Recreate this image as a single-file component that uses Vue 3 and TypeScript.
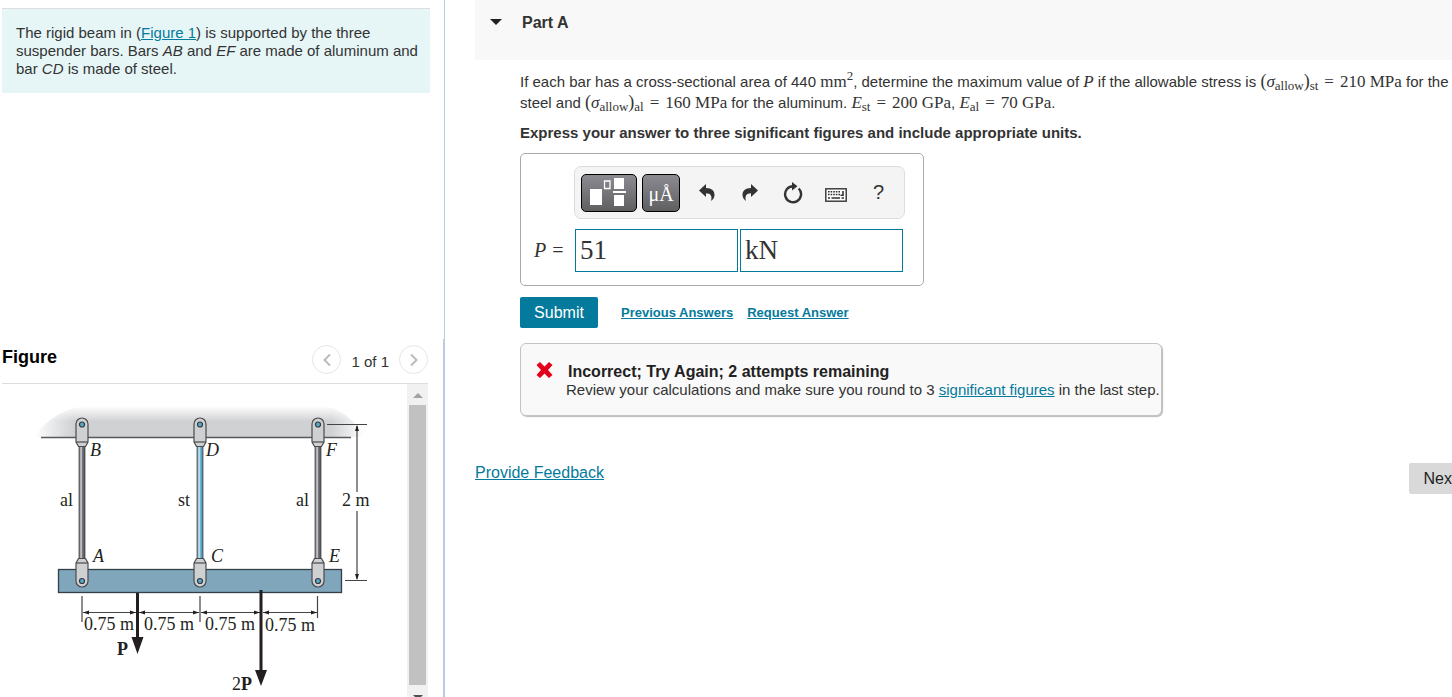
<script setup lang="ts">
import { ref } from 'vue'

interface Label {
  x: number
  y: number
  text: string
  kind: 'plain' | 'italic' | 'bold'
}

const answer = ref('51')
const unit = ref('kN')

const bars = [
  { x: 82, fill: 'url(#aluminum)' },
  { x: 200, fill: 'url(#steel)' },
  { x: 318, fill: 'url(#aluminum)' },
]

const labels: Label[] = [
  { x: 90, y: 456, text: 'B', kind: 'italic' },
  { x: 206, y: 456, text: 'D', kind: 'italic' },
  { x: 326, y: 456, text: 'F', kind: 'italic' },
  { x: 93, y: 562, text: 'A', kind: 'italic' },
  { x: 211, y: 562, text: 'C', kind: 'italic' },
  { x: 329, y: 562, text: 'E', kind: 'italic' },
  { x: 60, y: 506, text: 'al', kind: 'plain' },
  { x: 178, y: 506, text: 'st', kind: 'plain' },
  { x: 296, y: 506, text: 'al', kind: 'plain' },
  { x: 342, y: 506, text: '2 m', kind: 'plain' },
  { x: 84, y: 630, text: '0.75 m', kind: 'plain' },
  { x: 144, y: 630, text: '0.75 m', kind: 'plain' },
  { x: 205, y: 630, text: '0.75 m', kind: 'plain' },
  { x: 265, y: 631, text: '0.75 m', kind: 'plain' },
  { x: 117, y: 655, text: 'P', kind: 'bold' },
  { x: 232, y: 690, text: '2', kind: 'plain' },
  { x: 241, y: 690, text: 'P', kind: 'bold' },
]

const spans = [
  { from: 83, to: 136 },
  { from: 139, to: 199 },
  { from: 201, to: 260 },
  { from: 263, to: 317 },
]
</script>

<template>
  <div class="page">
    <aside class="side">
      <div class="upper">
        <p class="problem">
          The rigid beam in (<a href="#figure">Figure 1</a>) is supported by the three<br />
          suspender bars. Bars <i>AB</i> and <i>EF</i> are made of aluminum and<br />
          bar <i>CD</i> is made of steel.
        </p>
      </div>
      <section id="figure" class="figure">
        <header class="figure-head">
          <h2>Figure</h2>
          <nav class="pager">
            <button type="button" aria-label="Previous figure">
              <svg width="10" height="14" viewBox="0 0 10 14"><path d="M8 1.5 2.5 7 8 12.5" /></svg>
            </button>
            <span>1 of 1</span>
            <button type="button" aria-label="Next figure">
              <svg width="10" height="14" viewBox="0 0 10 14"><path d="M2 1.5 7.5 7 2 12.5" /></svg>
            </button>
          </nav>
        </header>
        <div class="viewer">
          <svg class="diagram" width="405" height="313" viewBox="2 384 405 313">
            <defs>
              <linearGradient id="aluminum">
                <stop offset="0" stop-color="#55565a" />
                <stop offset="0.2" stop-color="#a5a6a9" />
                <stop offset="0.4" stop-color="#c9cacc" />
                <stop offset="0.55" stop-color="#77787b" />
                <stop offset="1" stop-color="#4c4d50" />
              </linearGradient>
              <linearGradient id="steel">
                <stop offset="0" stop-color="#4f7f94" />
                <stop offset="0.35" stop-color="#d5e9f1" />
                <stop offset="0.6" stop-color="#68b4d3" />
                <stop offset="1" stop-color="#3f7c98" />
              </linearGradient>
              <linearGradient id="ceiling" x2="0" y2="1">
                <stop offset="0" stop-color="#d0d1d3" stop-opacity="0" />
                <stop offset="0.5" stop-color="#d0d1d3" />
                <stop offset="1" stop-color="#d0d1d3" />
              </linearGradient>
              <linearGradient id="fade">
                <stop offset="0" stop-color="#fff" stop-opacity="0" />
                <stop offset="0.12" stop-color="#fff" />
                <stop offset="0.9" stop-color="#fff" />
                <stop offset="1" stop-color="#fff" stop-opacity="0" />
              </linearGradient>
              <mask id="edges"><rect x="34" y="400" width="330" height="38" fill="url(#fade)" /></mask>
            </defs>

            <path d="M34 437Q52 411 84 406H325Q350 411 364 437Z" fill="url(#ceiling)" mask="url(#edges)" />
            <path d="M41 437.5H351" stroke="#58595b" stroke-width="1.5" />

            <rect x="58.5" y="569.5" width="283" height="23" fill="#7fa6ba" stroke="#333f47" stroke-width="1.3" />

            <g v-for="bar in bars" :key="bar.x" :transform="`translate(${bar.x} 0)`">
              <rect x="-3" y="446" width="6" height="114" :fill="bar.fill" stroke="#4b4d50" stroke-width="0.8" />
              <g class="clevis">
                <path d="M-6 442V424A6 6 0 0 1 6 424V442L3.500 446.500H-3.500Z" />
                <path d="M-6 442H6" />
                <circle cx="0" cy="424.500" r="2.5" />
                <path d="M-6 563L-3.500 558.500H3.500L6 563V581A6 6 0 0 1 -6 581Z" />
                <path d="M-6 563H6" />
                <circle cx="0" cy="581" r="2.5" />
              </g>
            </g>

            <g class="dimension">
              <path d="M327 424.500H367M345 580.500H367M357 426V492M357 511V579" />
              <path d="M82 596V622M200 596V622M317.500 596V618" />
              <path v-for="s in spans" :key="s.from" :d="`M${s.from} 612.500H${s.to}`" />
            </g>
            <g fill="#231f20">
              <path d="M357 425L359 431H355ZM357 580L359 574H355Z" />
              <path
                v-for="s in spans"
                :key="s.from"
                :d="`M${s.from} 612.500l6 -2v4ZM${s.to} 612.500l-6 -2v4Z`"
              />
              <path d="M136 593H139V637H143.500L137.500 654L131.500 637H136Z" />
              <path d="M259.500 590H262.500V670H267L261 686L255 670H259.500Z" />
            </g>
            <text v-for="(l, i) in labels" :key="i" :x="l.x" :y="l.y" :class="l.kind">{{ l.text }}</text>
          </svg>
          <div class="scrollbar" aria-hidden="true">
            <span class="arrow up"></span>
            <span class="thumb"></span>
            <span class="arrow down"></span>
          </div>
        </div>
      </section>
    </aside>

    <main class="main">
      <header class="part">
        <span class="caret"></span>
        <h1>Part A</h1>
      </header>

      <div class="content">
        <p class="question">
          If each bar has a cross-sectional area of 440 <span class="math">mm<sup>2</sup></span
          >, determine the maximum value of <span class="math"><i>P</i></span> if the allowable stress is
          <span class="math"><b>(</b><i>σ</i><sub>allow</sub><b>)</b><sub>st</sub><em>=</em>210 MPa</span> for the<br />
          steel and <span class="math"><b>(</b><i>σ</i><sub>allow</sub><b>)</b><sub>al</sub><em>=</em>160 MPa</span> for
          the aluminum. <span class="math"><i>E</i><sub>st</sub><em>=</em>200 GPa</span>,
          <span class="math"><i>E</i><sub>al</sub><em>=</em>70 GPa</span>.
        </p>
        <p class="instruction">Express your answer to three significant figures and include appropriate units.</p>

        <form class="answer" @submit.prevent>
          <div class="toolbar">
            <button type="button" class="dark templates" aria-label="Templates">
              <svg width="40" height="32" viewBox="0 0 40 32">
                <path d="M1 12H13V28H1ZM25 1H35V12H25ZM25 18H35V29H25ZM24 14H37V16H24Z" fill="#fff" />
                <path d="M15.500 4H21V11.500H15.500Z" fill="none" stroke="#fff" stroke-width="1.3" />
              </svg>
            </button>
            <button type="button" class="dark units" aria-label="Units">μÅ</button>
            <button type="button" class="tool" aria-label="Undo">
              <svg width="16" height="18" viewBox="0 0 16 18">
                <path d="M0 6.500 7 0V4C13 4 15.500 7 15.500 11C15.500 13.500 14 15.500 12 17C13.500 12 11.500 9.300 7 9.300V13Z" />
              </svg>
            </button>
            <button type="button" class="tool" aria-label="Redo">
              <svg width="16" height="18" viewBox="0 0 16 18">
                <path d="M16 6.500 9 0V4C3 4 .5 7 .5 11C.5 13.500 2 15.500 4 17C2.500 12 4.500 9.300 9 9.300V13Z" />
              </svg>
            </button>
            <button type="button" class="tool" aria-label="Reset">
              <svg width="20" height="22" viewBox="0 0 20 22">
                <path d="M15.700 6.500A8 8 0 1 1 10 4.200" fill="none" stroke="#333" stroke-width="2.4" />
                <path d="M9 0 14.500 4.200 9 8.500Z" />
              </svg>
            </button>
            <button type="button" class="tool keyboard" aria-label="Keyboard">
              <svg width="22" height="14" viewBox="0 0 22 14">
                <rect x="0.8" y="0.8" width="20.4" height="12.4" fill="#fff" stroke="#333" stroke-width="1.4" />
                <path d="M3 3.800H16M3 6.500H16" fill="none" stroke="#333" stroke-width="1.6" stroke-dasharray="1.600 1" />
                <path d="M3 10H5M6.500 10H15M16.500 10H19M18 3V7.300H15.500" fill="none" stroke="#333" stroke-width="1.6" />
              </svg>
            </button>
            <button type="button" class="tool help" aria-label="Help">?</button>
          </div>
          <div class="fields">
            <label for="value"><i>P</i><span>=</span></label>
            <input id="value" v-model="answer" type="text" />
            <input v-model="unit" type="text" aria-label="Unit" />
          </div>
        </form>

        <div class="actions">
          <button type="button" class="submit">Submit</button>
          <a href="#previous">Previous Answers</a>
          <a href="#request">Request Answer</a>
        </div>

        <section class="feedback">
          <svg width="17" height="16" viewBox="0 0 17 16">
            <path d="M4 0 8.500 4.500 13 0 16.500 3 12 8 16.500 13 13 16 8.500 11.500 4 16 .5 13 5 8 .5 3Z" fill="#e2001a" />
          </svg>
          <div>
            <h2>Incorrect; Try Again; 2 attempts remaining</h2>
            <p>
              Review your calculations and make sure you round to 3 <a href="#sigfigs">significant figures</a> in the
              last step.
            </p>
          </div>
        </section>
      </div>

      <footer class="foot">
        <a href="#feedback">Provide Feedback</a>
        <button type="button" class="next">Next</button>
      </footer>
    </main>
  </div>
</template>

<style>
body {
  margin: 0;
  background: #fff;
}
</style>

<style scoped>
.page {
  display: flex;
  height: 100vh;
  overflow: hidden;
  font-family: "Liberation Sans", Arial, sans-serif;
  font-size: 15px;
  color: #333;
}
h1,
h2,
p {
  margin: 0;
}
a {
  color: #047a9c;
}
button {
  font-family: inherit;
  padding: 0;
}
.side {
  display: flex;
  flex-direction: column;
  flex: none;
  width: 445px;
}
.upper {
  box-sizing: border-box;
  height: 339px;
  padding: 8px 14px 0 2px;
  border-right: 1px solid #b8cbe0;
}
.problem {
  padding: 15px 8px 15px 14px;
  line-height: 18px;
  border-top: 1px solid #ddd;
  background: #e6f6f7;
}
.figure {
  display: flex;
  flex-direction: column;
  flex: 1;
  min-height: 0;
  padding: 0 15px 0 2px;
  border-right: 2px solid #b8cbe0;
}
.figure-head {
  display: flex;
  justify-content: space-between;
  box-sizing: border-box;
  height: 45px;
  padding-top: 6px;
  border-bottom: 1px solid #ddd;
}
.figure-head h2 {
  font-size: 18px;
  line-height: 24px;
  color: #000;
}
.pager {
  display: flex;
  align-items: flex-start;
  gap: 10px;
  line-height: 34px;
}
.pager button {
  display: grid;
  place-items: center;
  box-sizing: border-box;
  width: 29px;
  height: 29px;
  border: 1px solid #e5e5e5;
  border-radius: 50%;
  background: #fff;
}
.pager path {
  fill: none;
  stroke: #bbb;
  stroke-width: 2;
}
.viewer {
  display: flex;
  justify-content: space-between;
  flex: 1;
  min-height: 0;
  overflow: hidden;
}
.diagram {
  flex: none;
}
.diagram text {
  font-family: "Liberation Serif", "Times New Roman", serif;
  font-size: 18px;
  fill: #231f20;
}
.diagram .italic {
  font-style: italic;
}
.diagram .bold {
  font-weight: bold;
}
.clevis path {
  fill: #cfd0d2;
  stroke: #4a4b4e;
  stroke-width: 1.2;
}
.clevis circle {
  fill: #5aa9cc;
  stroke: #33383d;
  stroke-width: 1.2;
}
.dimension {
  fill: none;
  stroke: #444;
  stroke-width: 1.2;
}
.scrollbar {
  display: flex;
  flex-direction: column;
  align-items: center;
  width: 21px;
  background: #f1f1f1;
}
.thumb {
  flex: none;
  width: 17px;
  height: 280px;
  margin: 7px 0 10px;
  background: #c1c1c1;
}
.arrow {
  flex: none;
  border: 5px solid transparent;
}
.up {
  margin-top: 9px;
  border-top: 0;
  border-bottom-color: #a3a3a3;
}
.down {
  border-top-color: #505050;
}
.main {
  flex: 1;
  min-width: 0;
  padding-left: 30px;
}
.part {
  display: flex;
  align-items: flex-start;
  gap: 20px;
  box-sizing: border-box;
  height: 60px;
  padding: 13px 15px 12px;
  background: #f8f8f8;
}
.part h1 {
  font-size: 16px;
  line-height: 20px;
}
.caret {
  margin-top: 6px;
  border: 6px solid transparent;
  border-top-color: #222;
  border-bottom: 0;
}
.content {
  padding: 11px 0 0 45px;
}
.question {
  line-height: 21px;
  white-space: nowrap;
}
.math {
  font-family: "Liberation Serif", "Times New Roman", serif;
  font-size: 17px;
  line-height: 0;
}
.math sup,
.math sub {
  font-size: 13px;
  line-height: 0;
}
.math sub {
  vertical-align: -3px;
}
.math sup {
  vertical-align: 7px;
}
.math b {
  font-weight: normal;
  font-size: 18px;
}
.math em {
  font-style: normal;
  margin: 0 6px;
}
.instruction {
  margin-top: 9px;
  font-weight: bold;
  line-height: 21px;
}
.answer {
  box-sizing: border-box;
  width: 404px;
  margin-top: 10px;
  padding: 12px 18px 13px 12px;
  border: 1px solid #aaa;
  border-radius: 5px;
}
.toolbar {
  display: flex;
  align-items: center;
  box-sizing: border-box;
  height: 53px;
  margin-left: 41px;
  padding-left: 6px;
  border: 1px solid #ddd;
  border-radius: 7px;
  background: #f4f4f4;
}
.dark {
  display: grid;
  place-items: center;
  box-sizing: border-box;
  height: 38px;
  border: 1px solid #000;
  border-radius: 5px;
  background: linear-gradient(#8d8b92, #5f5f61);
  color: #fff;
}
.templates {
  width: 56px;
  margin-right: 5px;
}
.units {
  width: 38px;
  margin-right: 5px;
  padding-top: 4px;
  font-family: "Liberation Serif", serif;
  font-size: 20px;
}
.tool {
  display: grid;
  place-items: center;
  width: 43px;
  height: 38px;
  border: 0;
  background: none;
  color: #333;
}
.tool svg {
  fill: #333;
}
.keyboard {
  padding-top: 4px;
}
.help {
  font-size: 20px;
}
.fields {
  display: flex;
  align-items: center;
  gap: 2px;
  margin-top: 10px;
  padding-right: 2px;
}
.fields label {
  display: flex;
  gap: 6px;
  flex: none;
  box-sizing: border-box;
  width: 40px;
  padding-left: 1px;
  font-family: "Liberation Serif", serif;
  font-size: 20px;
  white-space: nowrap;
}
.fields input {
  flex: 1;
  min-width: 0;
  box-sizing: border-box;
  height: 43px;
  padding: 0 4px;
  border: 1px solid #047a9c;
  border-radius: 0;
  font-family: "Liberation Serif", serif;
  font-size: 27px;
  color: #333;
}
.actions {
  display: flex;
  align-items: center;
  gap: 14px;
  margin-top: 11px;
  font-size: 13px;
  font-weight: bold;
}
.submit {
  width: 78px;
  height: 31px;
  margin-right: 9px;
  border: 0;
  border-radius: 2px;
  background: #047a9c;
  color: #fff;
  font-size: 16px;
}
.feedback {
  display: flex;
  gap: 13px;
  box-sizing: border-box;
  width: 642px;
  margin-top: 15px;
  padding: 18px 8px 16px 15px;
  border: 1px solid #c4c4c4;
  border-radius: 6px;
  box-shadow: 1px 1px 1px #bbb;
  background: #f9f9f9;
  white-space: nowrap;
}
.feedback svg {
  flex: none;
}
.feedback h2 {
  padding-left: 2px;
  font-size: 16px;
  line-height: 19px;
  color: #222;
}
.feedback p {
  line-height: 18px;
}
.foot {
  display: flex;
  align-items: flex-start;
  justify-content: space-between;
  margin-top: 47px;
  font-size: 16px;
  line-height: 19px;
}
.next {
  width: 62px;
  height: 31px;
  margin-right: -19px;
  border: 0;
  border-radius: 2px;
  background: #d9d9d9;
  color: #222;
  font-size: 16px;
}
</style>
